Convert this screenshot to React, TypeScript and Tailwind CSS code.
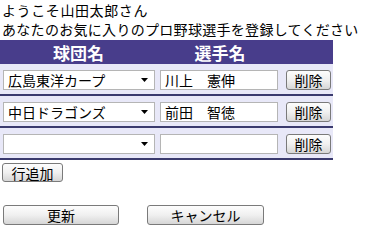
import React from "react";

const font = { fontFamily: '"Noto Sans CJK JP", "Noto Sans", sans-serif' };

type Row = { team: string; player: string };

const rows: Row[] = [
  { team: "広島東洋カープ", player: "川上　憲伸" },
  { team: "中日ドラゴンズ", player: "前田　智徳" },
  { team: "", player: "" },
];

function Btn({ label, className }: { label: string; className: string }) {
  return (
    <button
      className={`flex items-center justify-center rounded-[3px] border border-[#7a7a7a] bg-linear-to-b from-[#fdfdfd] via-[#f0f0f0] to-[#d6d6d6] text-[14px] leading-none text-black ${className}`}
    >
      {label}
    </button>
  );
}

function FakeSelect({ value }: { value: string }) {
  return (
    <div className="flex h-[20px] w-[152px] items-center justify-between border border-[#b5b5b5] bg-white pl-[4px] pr-[4px]">
      <span className="text-[14px] leading-none">{value}</span>
      <svg width="7" height="4" viewBox="0 0 7 4" className="mr-[2px]">
        <path d="M0 0h7L3.5 4z" fill="#000" />
      </svg>
    </div>
  );
}

export default function App() {
  return (
    <div className="h-[240px] w-[366px] bg-white text-black" style={font}>
      <p className="pl-[2px] text-[14px] leading-[20px] tracking-[0.6px]">ようこそ山田太郎さん</p>
      <p className="-mt-[1px] pl-[2px] text-[14px] leading-[20px] tracking-[0.3px]">
        あなたのお気に入りのプロ野球選手を登録してください
      </p>

      <div className="mt-[1px] w-[333px]">
        {/* header */}
        <div className="flex h-[24px] items-center bg-[#483d8b] text-[17px] font-bold text-white">
          <div className="w-[157px] text-center leading-none">球団名</div>
          <div className="w-[126px] text-center leading-none">選手名</div>
          <div className="flex-1" />
        </div>

        {rows.map((r, i) => (
          <div
            key={i}
            className="flex items-start border-b-2 border-[#3a3a6e] bg-[#e8e8f8] pb-[4px] pt-[6px]"
          >
            <div className="w-[157px] pl-[3px]">
              <FakeSelect value={r.team} />
            </div>
            <div className="w-[126px] pl-[3px]">
              <div className="flex h-[20px] w-[118px] items-center border border-[#b5b5b5] bg-white pl-[4px]">
                <span className="text-[14px] leading-none">{r.player}</span>
              </div>
            </div>
            <div className="pl-[3px]">
              <Btn label="削除" className="h-[20px] w-[45px]" />
            </div>
          </div>
        ))}
      </div>

      <div className="mt-[3px] pl-[2px]">
        <Btn label="行追加" className="h-[19px] w-[61px]" />
      </div>

      <div className="mt-[23px] flex gap-[28px] pl-[3px]">
        <Btn label="更新" className="h-[20px] w-[116px]" />
        <Btn label="キャンセル" className="h-[20px] w-[117px]" />
      </div>
    </div>
  );
}
